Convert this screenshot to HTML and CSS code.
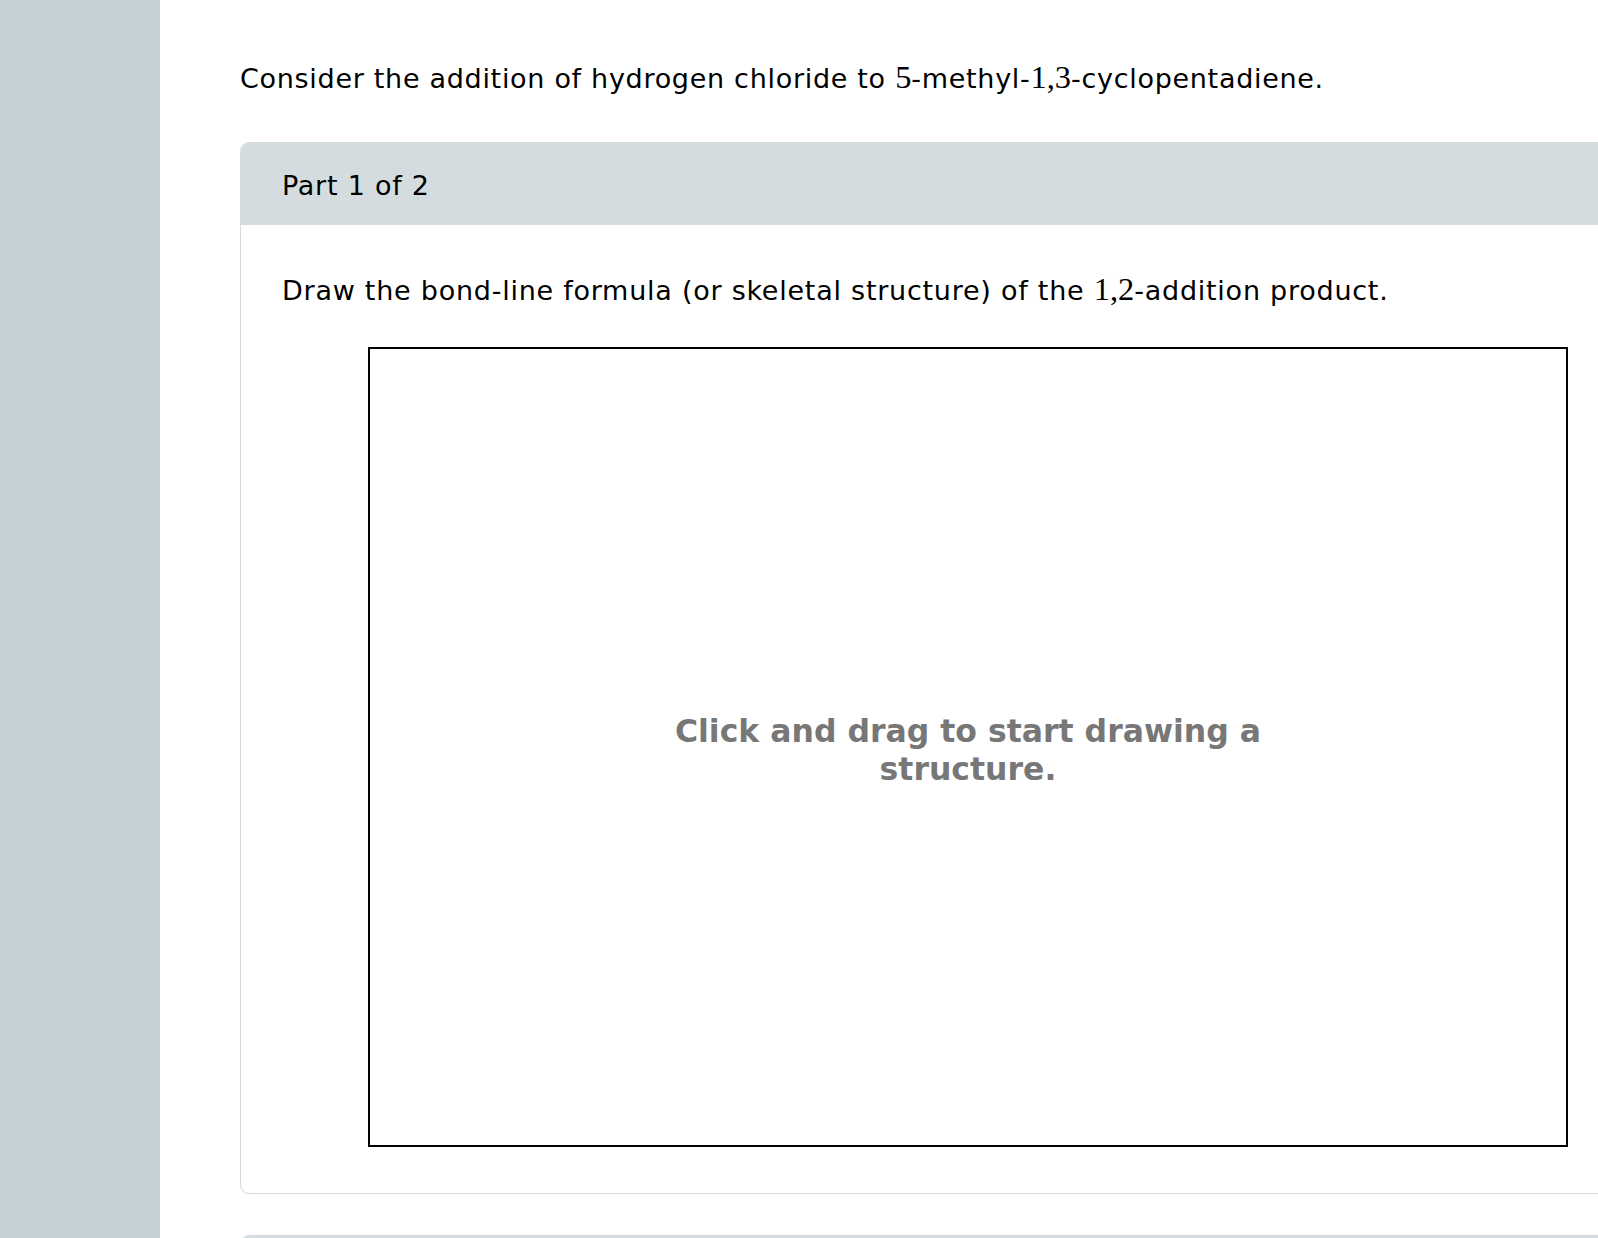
FILE: index.html
```html
<!DOCTYPE html>
<html lang="en">
<head>
<meta charset="utf-8">
<title>Addition of HCl</title>
<link rel="stylesheet" href="styles.css">
</head>
<body>
<div class="page">
  <aside class="sidebar"></aside>
  <main class="main">
    <p class="intro">Consider the addition of hydrogen chloride to <span class="m">5</span>-methyl-<span class="m">1,3</span>-cyclopentadiene.</p>
    <section class="card">
      <div class="card-head">Part 1 of 2</div>
      <div class="card-body">
        <p class="prompt">Draw the bond-line formula (or skeletal structure) of the <span class="m">1,2</span>-addition product.</p>
        <div class="canvas">
          <div class="hint">Click and drag to start drawing a structure.</div>
        </div>
      </div>
    </section>
    <section class="card card-next">
      <div class="card-head"></div>
    </section>
  </main>
</div>
</body>
</html>
```

FILE: styles.css
```css
html, body {
  margin: 0;
  padding: 0;
  background: #ffffff;
}

body {
  font-family: "DejaVu Sans", Verdana, sans-serif;
  font-size: 27px;
  color: #000;
  overflow: hidden;
}

.page {
  display: flex;
  width: 1598px;
  height: 1238px;
  overflow: hidden;
}

.sidebar {
  flex: 0 0 160px;
  background: #c4d0d4;
}

.main {
  flex: 1;
  min-width: 0;
  padding: 61px 0 0 80px;
  overflow: hidden;
}

.intro {
  margin: 0 0 45px 0;
  line-height: 36px;
  letter-spacing: 0.7px;
  white-space: nowrap;
}

.m {
  font-family: "Liberation Serif", "Times New Roman", serif;
  font-size: 1.2em;
  letter-spacing: 0;
  line-height: 1;
}

.card {
  width: 1440px;
  border: 1.5px solid #d4dadd;
  border-radius: 9px;
  overflow: hidden;
  background: #fff;
}

.card-head {
  background: #d4dcdf;
  padding: 25px 0 21px 41px;
  line-height: 36px;
  height: 36px;
  letter-spacing: 0.75px;
}

.card-body {
  padding: 48px 0 46px 41px;
}

.prompt {
  margin: 0 0 38px 0;
  line-height: 36px;
  letter-spacing: 0.75px;
  white-space: nowrap;
}

.canvas {
  box-sizing: border-box;
  width: 1200px;
  height: 800px;
  margin-left: 86px;
  border: 2px solid #000;
  display: flex;
  align-items: center;
  justify-content: center;
}

.hint {
  width: 640px;
  padding-top: 7px;
  text-align: center;
  font-weight: bold;
  font-size: 31.5px;
  line-height: 37.5px;
  color: #777777;
}

.card-next {
  margin-top: 41px;
  height: 200px;
}
```
